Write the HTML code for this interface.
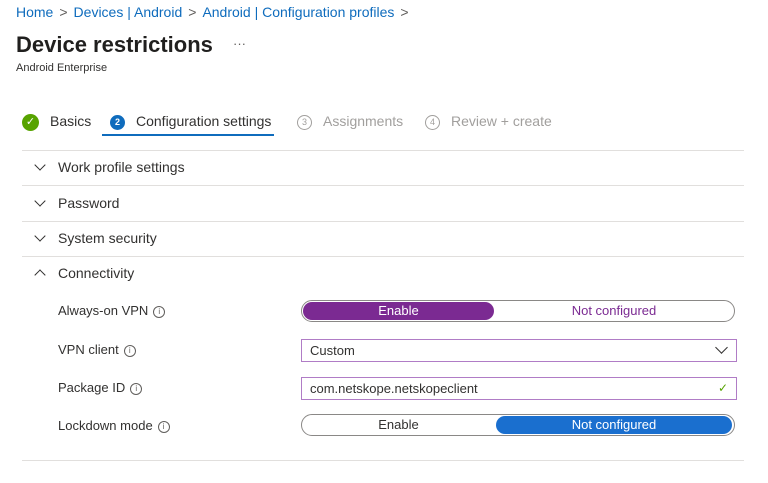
<!DOCTYPE html>
<html><head><style>
body{margin:0;width:768px;height:483px;background:#fff;font-family:"Liberation Sans",sans-serif;color:#323130;position:relative;overflow:hidden}
.a{position:absolute;white-space:nowrap}
.bc{color:#0f6cbd;font-size:14px;top:4px;left:16px}
.bc span{color:#605e5c;margin:0 6px}
.line{position:absolute;left:22px;width:722px;height:1px;background:#e1dfdd}
.sec{position:absolute;left:36px;font-size:14px}
.chev{display:inline-block;width:7px;height:7px;border-right:1.3px solid #323130;border-bottom:1.3px solid #323130;transform:rotate(45deg);margin-right:14px;position:relative;top:-3px}
.up{transform:rotate(-135deg);top:1px}
.lbl{position:absolute;left:58px;font-size:13px}
.info{display:inline-block;width:10px;height:10px;border:1px solid #605e5c;border-radius:50%;font-size:8px;text-align:center;line-height:10px;margin-left:5px;vertical-align:1px;color:#605e5c}
.tog{position:absolute;left:301px;width:432px;height:20px;border:1px solid #8a8886;border-radius:11px;font-size:13px}
.tog div{position:absolute;top:1px;height:18px;line-height:18px;text-align:center;border-radius:10px}
.box{position:absolute;left:301px;width:433px;height:21px;border:1px solid #b07cc6;font-size:13px;line-height:21px;padding-left:8px;box-sizing:content-box}
.step{position:absolute;top:113px;font-size:14px}
.circ{display:inline-block;width:15px;height:15px;border-radius:50%;font-size:9px;text-align:center;line-height:15px;vertical-align:1px;margin-right:11px}
</style></head><body>
<div class="a bc">Home<span>&gt;</span>Devices | Android<span>&gt;</span>Android | Configuration profiles<span>&gt;</span></div>
<div class="a" style="left:16px;top:32px;font-size:22px;font-weight:600;color:#201f1e">Device restrictions</div>
<div class="a" style="left:233px;top:36px;font-size:13px;color:#605e5c">···</div>
<div class="a" style="left:16px;top:62px;font-size:11px">Android Enterprise</div>
<div class="step" style="left:22px"><span class="circ" style="background:#57a300;color:#fff;width:17px;height:17px;line-height:17px;font-size:11px">✓</span>Basics</div>
<div class="step" style="left:110px"><span class="circ" style="background:#0f6cbd;color:#fff;font-weight:bold">2</span>Configuration settings</div>
<div class="a" style="left:102px;top:134px;width:172px;height:2px;background:#0f6cbd"></div>
<div class="step" style="left:297px;color:#a19f9d"><span class="circ" style="border:1px solid #a19f9d;width:13px;height:13px;line-height:13px">3</span>Assignments</div>
<div class="step" style="left:425px;color:#a19f9d"><span class="circ" style="border:1px solid #a19f9d;width:13px;height:13px;line-height:13px">4</span>Review + create</div>
<div class="line" style="top:150px"></div>
<div class="sec" style="top:159px"><i class="chev"></i>Work profile settings</div>
<div class="line" style="top:185px"></div>
<div class="sec" style="top:195px"><i class="chev"></i>Password</div>
<div class="line" style="top:221px"></div>
<div class="sec" style="top:230px"><i class="chev"></i>System security</div>
<div class="line" style="top:256px"></div>
<div class="sec" style="top:265px"><i class="chev up"></i>Connectivity</div>
<div class="lbl" style="top:303px">Always-on VPN<span class="info">i</span></div>
<div class="lbl" style="top:342px">VPN client<span class="info">i</span></div>
<div class="lbl" style="top:380px">Package ID<span class="info">i</span></div>
<div class="lbl" style="top:418px">Lockdown mode<span class="info">i</span></div>
<div class="tog" style="top:300px"><div style="left:1px;width:191px;background:#7b2a92;color:#fff">Enable</div><div style="left:194px;width:236px;color:#7b2a92">Not configured</div></div>
<div class="box" style="top:339px;width:426px">Custom<span style="position:absolute;right:10px;top:3px;width:8px;height:8px;border-right:1.3px solid #323130;border-bottom:1.3px solid #323130;transform:rotate(45deg)"></span></div>
<div class="box" style="top:377px;width:426px">com.netskope.netskopeclient<span style="position:absolute;right:8px;top:0;color:#57a300;font-size:12px">✓</span></div>
<div class="tog" style="top:414px"><div style="left:1px;width:191px;color:#323130">Enable</div><div style="left:194px;width:236px;background:#1a6fcf;color:#fff">Not configured</div></div>
<div class="line" style="top:460px"></div>
</body></html>
